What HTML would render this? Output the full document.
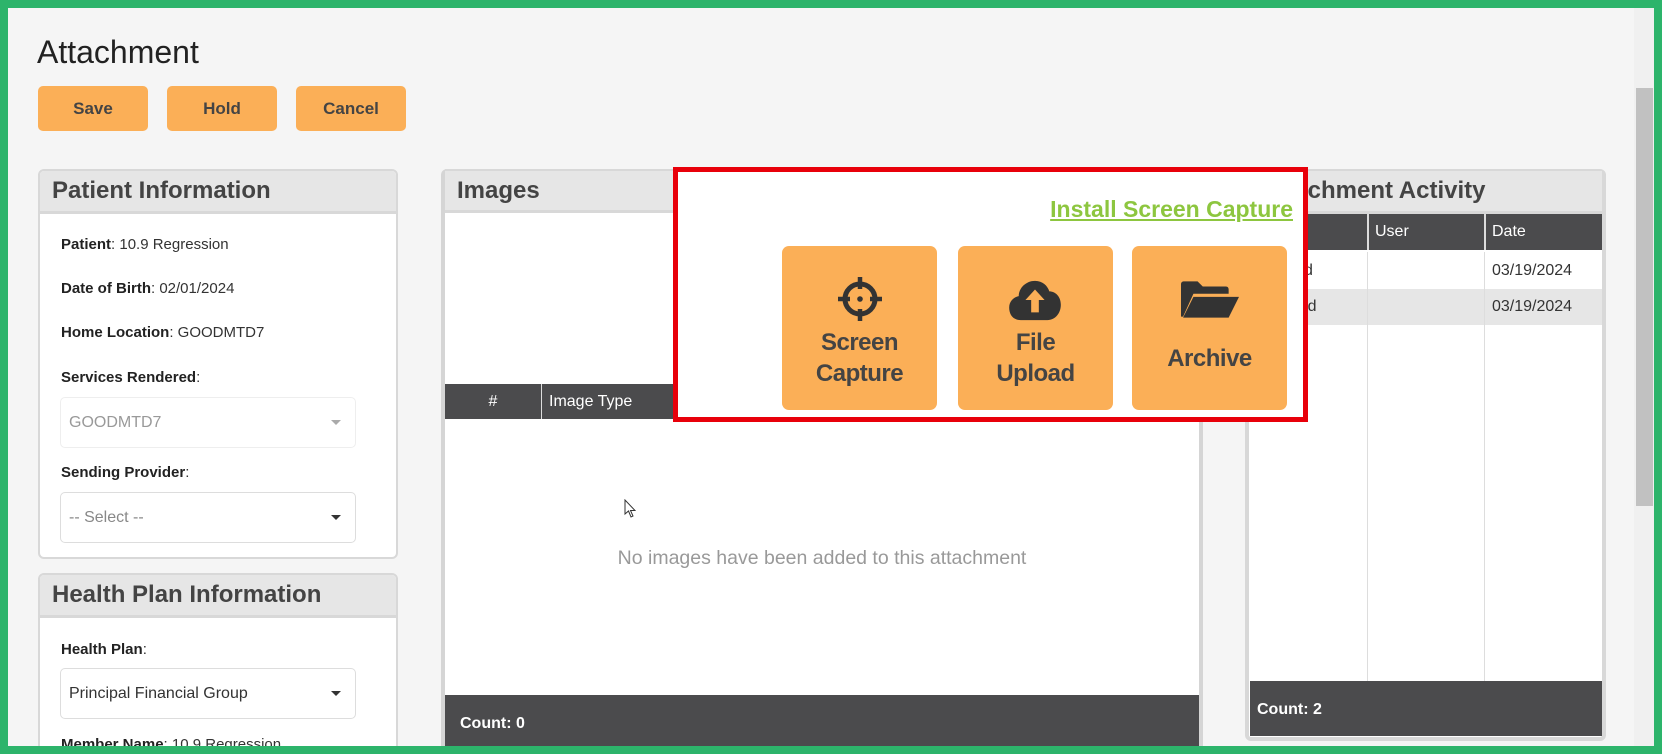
<!DOCTYPE html>
<html><head><meta charset="utf-8"><style>
*{margin:0;padding:0;box-sizing:border-box}
html,body{width:1662px;height:754px;overflow:hidden}
body{background:#f5f5f5;font-family:"Liberation Sans",sans-serif;color:#333}
#w{position:relative;width:1662px;height:754px;overflow:hidden}
.a{position:absolute}
.btn{background:#fbaf57;border-radius:5px;color:#444;font-weight:bold;font-size:17px;text-align:center;line-height:45px;height:45px;width:110px;top:86px}
.panel{border:2px solid #d8d8d8;border-radius:6px;background:#fff}
.ph{background:#e6e6e6;border-bottom:3px solid #d8d8d8;font-weight:bold;font-size:24px;color:#444;padding-left:12px}
.lab{font-size:15px;color:#333}
.lab b{color:#222}
.sel{border:1px solid #ddd;border-radius:5px;background:#fff;font-size:16px;padding-left:8px;color:#555}
.car{position:absolute;right:14px;top:22px;width:0;height:0;border-left:5px solid transparent;border-right:5px solid transparent;border-top:5px solid #333}
.dark{background:#4b4b4d;color:#fff}
.big{background:#fbaf57;border-radius:7px;width:155px;height:164px;top:246px;color:#444;font-weight:bold;font-size:24px;text-align:center;line-height:31px;letter-spacing:-0.5px}
.g{background:#2db46b;position:absolute}
</style></head><body><div id="w">
<div class="a" style="left:1634px;top:8px;width:20px;height:738px;background:#f0f0f0"></div>
<div class="a" style="left:1636px;top:88px;width:17px;height:418px;background:#c1c1c1"></div>

<div class="a" style="left:37px;top:34px;font-size:32px;color:#222">Attachment</div>
<div class="a btn" style="left:38px">Save</div>
<div class="a btn" style="left:167px">Hold</div>
<div class="a btn" style="left:296px">Cancel</div>

<div class="a panel" style="left:38px;top:169px;width:360px;height:390px;overflow:hidden">
 <div class="ph" style="height:43px;line-height:40px">Patient Information</div>
</div>
<div class="a lab" style="left:61px;top:236px"><b>Patient</b>: 10.9 Regression</div>
<div class="a lab" style="left:61px;top:280px"><b>Date of Birth</b>: 02/01/2024</div>
<div class="a lab" style="left:61px;top:324px"><b>Home Location</b>: GOODMTD7</div>
<div class="a lab" style="left:61px;top:369px"><b>Services Rendered</b>:</div>
<div class="a sel" style="left:60px;top:397px;width:296px;height:51px;line-height:49px;color:#999;border-color:#eee">GOODMTD7<div class="car" style="border-top-color:#aaa"></div></div>
<div class="a lab" style="left:61px;top:464px"><b>Sending Provider</b>:</div>
<div class="a sel" style="left:60px;top:492px;width:296px;height:51px;line-height:49px;color:#888">-- Select --<div class="car"></div></div>

<div class="a panel" style="left:38px;top:573px;width:360px;height:181px;overflow:hidden">
 <div class="ph" style="height:43px;line-height:40px">Health Plan Information</div>
</div>
<div class="a lab" style="left:61px;top:641px"><b>Health Plan</b>:</div>
<div class="a sel" style="left:60px;top:668px;width:296px;height:51px;line-height:49px;color:#333">Principal Financial Group<div class="car"></div></div>
<div class="a lab" style="left:61px;top:736px"><b>Member Name</b>: 10.9 Regression</div>

<div class="a panel" style="left:441px;top:169px;width:762px;height:585px;border-width:0 4px;border-color:#d5d5d5">
 <div class="ph" style="height:44px;line-height:40px;border-top:2px solid #d8d8d8">Images</div>
</div>
<div class="a dark" style="left:445px;top:384px;width:754px;height:35px;font-size:16px;line-height:35px">
 <span class="a" style="left:0;width:96px;text-align:center">#</span>
 <span class="a" style="left:96px;top:0;width:1px;height:35px;background:#ddd"></span>
 <span class="a" style="left:104px">Image Type</span>
</div>
<div class="a" style="left:441px;top:547px;width:762px;text-align:center;font-size:19.5px;color:#999">No images have been added to this attachment</div>
<svg class="a" style="left:624px;top:499px" width="12" height="20" viewBox="0 0 12 20"><path d="M1 1 L1 15 L4.5 12 L7 18 L9 17 L6.5 11.5 L11 11.5 Z" fill="#fff" stroke="#333" stroke-width="1"/></svg>
<div class="a dark" style="left:445px;top:695px;width:754px;height:59px;font-weight:bold;font-size:16px;line-height:58px;padding-left:15px">Count: 0</div>

<div class="a panel" style="left:1245px;top:169px;width:361px;height:572px;border-width:2px 4px 4px">
 <div class="ph" style="height:43px;line-height:40px">Attachment Activity</div>
</div>
<div class="a dark" style="left:1250px;top:214px;width:352px;height:36px;font-size:16px;line-height:36px">
 <span class="a" style="left:6px">Activity</span>
 <span class="a" style="left:117px;top:0;width:2px;height:36px;background:#ddd"></span>
 <span class="a" style="left:125px">User</span>
 <span class="a" style="left:234px;top:0;width:2px;height:36px;background:#ddd"></span>
 <span class="a" style="left:242px">Date</span>
</div>
<div class="a" style="left:1250px;top:252px;width:352px;height:37px;font-size:16px;line-height:37px;color:#333"><span class="a" style="left:6px">Created</span><span class="a" style="left:242px">03/19/2024</span></div>
<div class="a" style="left:1250px;top:289px;width:352px;height:36px;background:#e6e6e6;font-size:16px;line-height:36px;color:#333"><span class="a" style="left:6px">Updated</span><span class="a" style="left:242px">03/19/2024</span></div>
<div class="a" style="left:1367px;top:252px;width:1px;height:429px;background:#ddd"></div>
<div class="a" style="left:1484px;top:252px;width:1px;height:429px;background:#ddd"></div>
<div class="a dark" style="left:1250px;top:681px;width:352px;height:55px;font-weight:bold;font-size:16px;line-height:58px;padding-left:7px">Count: 2</div>

<div class="a" style="left:673px;top:167px;width:635px;height:255px;background:#fff;border:5px solid #e8000a"></div>
<div class="a" style="left:880px;top:196px;width:413px;text-align:right;font-size:23px;font-weight:bold;color:#8dc63f;text-decoration:underline">Install Screen Capture</div>
<div class="a big" style="left:782px">
 <svg class="a" style="left:55px;top:30px" width="46" height="46" viewBox="0 0 46 46"><circle cx="23" cy="23" r="15" fill="none" stroke="#333" stroke-width="5"/><path d="M23 1v12M23 33v12M1 23h12M33 23h12" stroke="#333" stroke-width="4.5"/><circle cx="23" cy="23" r="2.8" fill="#333"/></svg>
 <div class="a" style="left:0;width:155px;top:81px">Screen<br>Capture</div>
</div>
<div class="a big" style="left:958px">
 <svg class="a" style="left:46px;top:32px" width="62" height="44" viewBox="0 0 54 46"><path d="M12 44 C3 44 0 37 0 31 C0 24 5 20 10 19 C10 10 18 3 27 3 C35 3 40 8 42 14 C48 14 54 19 54 28 C54 37 48 44 40 44 Z" fill="#333"/><path d="M27 12 L37 23 L31 23 L31 36 L23 36 L23 23 L17 23 Z" fill="#fbaf57"/></svg>
 <div class="a" style="left:0;width:155px;top:81px">File<br>Upload</div>
</div>
<div class="a big" style="left:1132px">
 <svg class="a" style="left:49px;top:35px" width="58" height="38" viewBox="0 0 56 36"><path d="M0 3 C0 1 1 0 3 0 L16 0 L21 5 L43 5 C45 5 46 6 46 8 L46 12 L12 12 L2 34 L0 34 Z" fill="#333"/><path d="M12 15 L56 15 L46 35 L2 35 Z" fill="#333"/></svg>
 <div class="a" style="left:0;width:155px;top:97px">Archive</div>
</div>

<div class="g" style="left:0;top:0;width:1662px;height:8px"></div>
<div class="g" style="left:0;top:746px;width:1662px;height:8px"></div>
<div class="g" style="left:0;top:0;width:8px;height:754px"></div>
<div class="g" style="left:1654px;top:0;width:8px;height:754px"></div>
</div></body></html>
